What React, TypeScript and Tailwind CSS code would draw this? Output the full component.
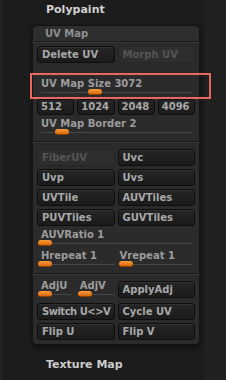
import React from "react";

const font = "font-['DejaVu_Sans',sans-serif] font-bold text-[10px]";

function Btn({ label, disabled = false, tight = false }: { label: string; disabled?: boolean; tight?: boolean }) {
  return (
    <div
      className={
        "h-[17px] rounded-[3px] pl-[4px] flex items-center leading-none whitespace-nowrap overflow-hidden " +
        (tight ? "tracking-[-0.5px] " : "") +
        (disabled
          ? "bg-[#2e2e2e] border border-[#262626] text-[#555555]"
          : "bg-gradient-to-b from-[#252525] to-[#1b1b1b] border border-[#0e0e0e] text-[#a8a8a8] shadow-[inset_0_1px_0_#303030]")
      }
    >
      {label}
    </div>
  );
}

function Knob({ pos }: { pos: string }) {
  return (
    <div
      className={
        "absolute top-[11px] w-[14px] h-[6px] rounded-full bg-gradient-to-b from-[#ff9d3a] to-[#d96800] border-b border-[#8a4000] " +
        pos
      }
    />
  );
}

function Slider({
  label,
  pos,
  track = "left-[4px] right-[3px]",
  pad = "pl-[4px]",
}: {
  label: string;
  pos: string;
  track?: string;
  pad?: string;
}) {
  return (
    <div className="relative h-[20px]">
      <span className={"block leading-[12px] text-[#9c9c9c] whitespace-nowrap " + pad}>{label}</span>
      <div className={"absolute top-[14px] h-px bg-[#464646] " + track} />
      <Knob pos={pos} />
    </div>
  );
}

function Sep() {
  return <div className="-mx-[5px] h-[2px] border-t border-[#1c1c1c] border-b border-b-[#363636]" />;
}

export default function App() {
  return (
    <div className={"relative w-[226px] h-[380px] bg-[#1c1c1c] flex overflow-hidden " + font}>
      <div className="w-[3px] h-full bg-[repeating-conic-gradient(#2c2c2c_0%_25%,#1a1a1a_0%_50%)] bg-size-[2px_2px]" />

      <div className="w-[202px] pl-[29px] flex flex-col">
        <div className="h-[25px] pl-[14px] pt-[3px] text-[11px] leading-[14px] text-[#d2d2d2]">Polypaint</div>

        <div className="w-[168px] rounded-[5px] bg-[#2b2b2b] border border-[#141414] shadow-[0_2px_4px_rgba(0,0,0,0.6)]">
          <div className="h-[15px] pl-[12px] leading-[15px] text-[#8e8e8e] rounded-t-[5px] bg-[#2e2e2e]">UV Map</div>

          <div className="px-[4px] pb-[4px] flex flex-col">
            <Sep />
            <div className="mt-[3px] grid grid-cols-2 gap-x-[3px]">
              <Btn label="Delete UV" />
              <Btn label="Morph UV" disabled />
            </div>

            <div className="mt-[15px]">
              <Slider label="UV Map Size 3072" pos="left-[51px]" />
            </div>

            <div className="mt-px grid grid-cols-4 gap-x-[3px]">
              {["512", "1024", "2048", "4096"].map((s) => (
                <div
                  key={s}
                  className="h-[16px] rounded-[3px] pl-[3px] flex items-center leading-none bg-gradient-to-b from-[#252525] to-[#1b1b1b] border border-[#0e0e0e] text-[#a8a8a8]"
                >
                  {s}
                </div>
              ))}
            </div>

            <div className="mt-[3px]">
              <Slider label="UV Map Border 2" pos="left-[18px]" />
            </div>

            <div className="mt-[3px]">
              <Sep />
            </div>

            <div className="mt-[6px] grid grid-cols-2 gap-x-[3px] gap-y-[3px]">
              <Btn label="FiberUV" disabled />
              <Btn label="Uvc" />
              <Btn label="Uvp" />
              <Btn label="Uvs" />
              <Btn label="UVTile" />
              <Btn label="AUVTiles" />
              <Btn label="PUVTiles" />
              <Btn label="GUVTiles" />
            </div>

            <div className="mt-[3px]">
              <Slider label="AUVRatio 1" pos="left-[1px]" track="left-[1px] right-[3px]" />
            </div>

            <div className="mt-px grid grid-cols-2 gap-x-[3px]">
              <Slider label="Hrepeat 1" pos="left-[1px]" track="left-[6px] right-0" />
              <Slider label="Vrepeat 1" pos="left-[1px]" track="left-[6px] right-[3px]" pad="pl-[2px]" />
            </div>

            <div className="mt-[3px]">
              <Sep />
            </div>

            <div className="mt-[6px] grid grid-cols-2 gap-x-[3px] gap-y-[3px]">
              <div className="grid grid-cols-2 -mt-[1px]">
                <Slider label="AdjU" pos="left-[1px]" track="left-[6px] right-[4px]" />
                <Slider label="AdjV" pos="left-[2px]" track="left-[6px] right-0" pad="pl-[4px]" />
              </div>
              <Btn label="ApplyAdj" />
              <Btn label="Switch U<>V" tight />
              <Btn label="Cycle UV" />
              <Btn label="Flip U" />
              <Btn label="Flip V" />
            </div>
          </div>
        </div>

        <div className="mt-[13px] pl-[14px] text-[11px] leading-[14px] text-[#cccccc]">Texture Map</div>
      </div>

      <div className="flex-1 h-full bg-[#202020]" />

      <div className="absolute left-[30px] top-[73px] w-[181px] h-[26px] border-2 border-[#e8675e]" />
    </div>
  );
}
